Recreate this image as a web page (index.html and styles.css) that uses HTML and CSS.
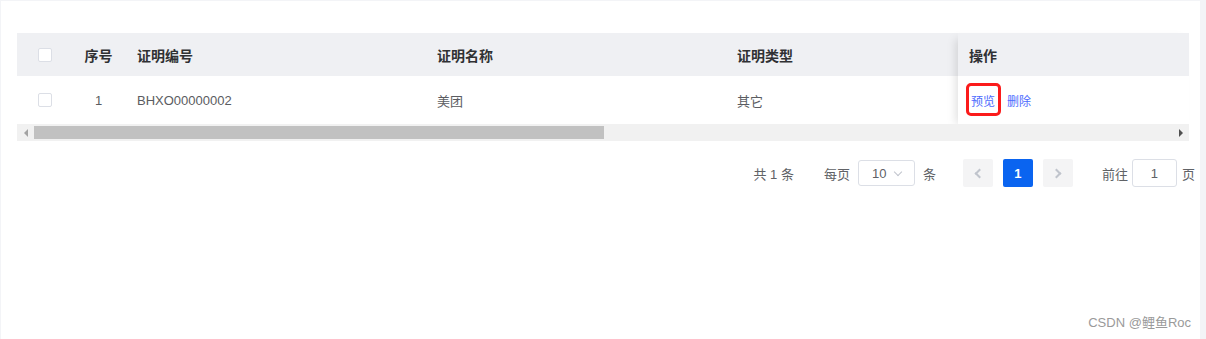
FILE: index.html
```html
<!DOCTYPE html>
<html lang="zh-CN">
<head>
<meta charset="utf-8">
<title>证明列表</title>
<link rel="stylesheet" href="styles.css">
</head>
<body>
<div class="page">
  <div class="card">
    <div class="table">
      <div class="viewport">
        <div class="row head">
          <div class="cell sel"><span class="cb"></span></div>
          <div class="cell idx">序号</div>
          <div class="cell wide">证明编号</div>
          <div class="cell wide">证明名称</div>
          <div class="cell wide">证明类型</div>
        </div>
        <div class="row body">
          <div class="cell sel"><span class="cb"></span></div>
          <div class="cell idx">1</div>
          <div class="cell wide">BHXO00000002</div>
          <div class="cell wide">美团</div>
          <div class="cell wide">其它</div>
        </div>
      </div>
      <div class="fixed">
        <div class="fcell head">操作</div>
        <div class="fcell body">
          <a class="link mark">预览</a>
          <a class="link">删除</a>
        </div>
      </div>
      <div class="scrollbar">
        <span class="arr"><span class="tri left"></span></span>
        <div class="track"><div class="thumb" style="width:570px"></div></div>
        <span class="arr"><span class="tri right"></span></span>
      </div>
    </div>

    <div class="pager">
      <span class="total">共 1 条</span>
      <span class="sizes">
        <span>每页</span>
        <span class="select"><span class="val">10</span><span class="chev"></span></span>
        <span>条</span>
      </span>
      <span class="btn prev"><span class="arrow-l"></span></span>
      <span class="btn num active">1</span>
      <span class="btn next"><span class="arrow-r"></span></span>
      <span class="jump">
        <span>前往</span>
        <span class="input">1</span>
        <span>页</span>
      </span>
    </div>

    <div class="watermark">CSDN @鲤鱼Roc</div>
  </div>
</div>
</body>
</html>
```

FILE: styles.css
```css
* { box-sizing: border-box; }
html, body { margin: 0; padding: 0; }
body {
  background: #f3f4f7;
  font-family: "Liberation Sans", "Noto Sans CJK SC", sans-serif;
  color: #606266;
  width: 1206px;
  height: 339px;
  overflow: hidden;
}
.page {
  padding: 1px 6px 0 1px;
  height: 339px;
}
.card {
  position: relative;
  background: #fff;
  height: 338px;
  padding: 32px 0 0 16px;
}

/* table */
.table {
  position: relative;
  width: 1172px;
}
.viewport {
  width: 1172px;
  overflow: hidden;
}
.row {
  display: flex;
  width: 2340px;
}
.row.head {
  height: 43px;
  background: #eff0f3;
  color: #303133;
  font-size: 14px;
  font-weight: 700;
}
.row.body {
  height: 48px;
  background: #fff;
  font-size: 13px;
  color: #5a5c61;
}
.cell {
  display: flex;
  align-items: center;
  flex: none;
}
.cell.sel { width: 55px; justify-content: center; }
.cell.idx { width: 53px; justify-content: center; }
.cell.wide { width: 300px; padding-left: 12px; }
.cb {
  width: 14px;
  height: 14px;
  border: 1px solid #dcdfe6;
  border-radius: 2px;
  background: #fff;
}

/* fixed right column */
.fixed {
  position: absolute;
  top: 0;
  right: 0;
  width: 231px;
  height: 91px;
  background: #fff;
  box-shadow: -5px 3px 9px -3px rgba(0, 0, 0, 0.13);
}
.fcell { display: flex; align-items: center; padding-left: 11px; }
.fcell.head {
  height: 43px;
  background: #eff0f3;
  color: #303133;
  font-size: 14px;
  font-weight: 700;
}
.fcell.body {
  height: 48px;
  padding-left: 13px;
  gap: 12px;
  font-size: 12px;
}
.link { color: #4d6bfe; cursor: pointer; }
.mark { position: relative; }
.mark::after {
  content: "";
  position: absolute;
  left: -5px;
  right: -6px;
  top: -9px;
  bottom: -7px;
  border: 3px solid #fb1b1b;
  border-radius: 5px;
}

/* scrollbar */
.scrollbar {
  position: relative;
  display: flex;
  height: 17px;
  background: #f1f1f1;
}
.arr {
  width: 17px;
  height: 17px;
  display: flex;
  align-items: center;
  justify-content: center;
  flex: none;
}
.tri { width: 0; height: 0; border-top: 4px solid transparent; border-bottom: 4px solid transparent; }
.tri.left { border-right: 4px solid #a3a3a3; }
.tri.right { border-left: 4px solid #505050; }
.track { flex: 1; padding-top: 2px; }
.thumb { height: 13px; background: #c1c1c1; }

/* pager */
.pager {
  margin-top: 18px;
  height: 28px;
  display: flex;
  align-items: center;
  justify-content: flex-end;
  padding-right: 5px;
  font-size: 13px;
  color: #606266;
}
.total { margin-right: 30px; }
.sizes { display: flex; align-items: center; gap: 8px; margin-right: 27px; }
.select {
  width: 57px;
  height: 26px;
  border: 1px solid #dcdfe6;
  border-radius: 3px;
  display: flex;
  align-items: center;
  padding-left: 13px;
  position: relative;
}
.chev {
  position: absolute;
  right: 13px;
  top: 8px;
  width: 6px;
  height: 6px;
  border-right: 1px solid #c0c4cc;
  border-bottom: 1px solid #c0c4cc;
  transform: rotate(45deg);
}
.btn {
  width: 30px;
  height: 28px;
  border-radius: 2px;
  background: #f4f4f5;
  display: flex;
  align-items: center;
  justify-content: center;
  margin-right: 10px;
}
.btn.next { margin-right: 29px; }
.btn.active {
  background: #0a64f0;
  color: #fff;
  font-weight: 700;
}
.arrow-l, .arrow-r {
  width: 7px;
  height: 7px;
  border-left: 2px solid #c0c4cc;
  border-bottom: 2px solid #c0c4cc;
}
.arrow-l { transform: rotate(45deg); margin-left: 3px; }
.arrow-r { transform: rotate(-135deg); margin-right: 3px; }
.jump { display: flex; align-items: center; }
.input {
  width: 45px;
  height: 28px;
  border: 1px solid #dcdfe6;
  border-radius: 3px;
  display: flex;
  align-items: center;
  justify-content: center;
  margin: 0 5px 0 4px;
}

.watermark {
  position: absolute;
  right: 9px;
  bottom: 8px;
  font-size: 13px;
  color: #9a9a9a;
}
```
